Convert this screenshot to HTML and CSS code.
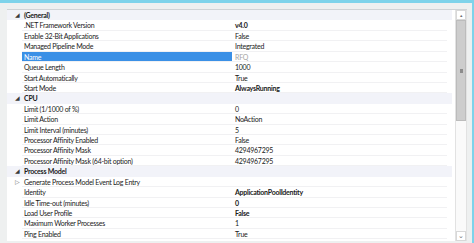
FILE: index.html
```html
<!DOCTYPE html>
<html lang="en">
<head>
    <meta charset="UTF-8">
    <title>Advanced Settings</title>
    <link rel="stylesheet" href="styles.css">
</head>
<body>
    <div class="window">
        <div class="grid-panel">
            <div class="prop-list" id="propList"></div>
            <div class="scrollbar">
                <div class="scroll-btn">&#9650;</div>
                <div class="scroll-thumb"><span class="grip"></span></div>
                <div class="scroll-track"></div>
                <div class="scroll-btn down">&#8964;</div>
            </div>
        </div>
    </div>

    <script>
        // cat = category header, sub = collapsed child, b = bold value, sel = selected
        const props = [
            { cat: "(General)" },
            { name: ".NET Framework Version", value: "v4.0", b: true },
            { name: "Enable 32-Bit Applications", value: "False" },
            { name: "Managed Pipeline Mode", value: "Integrated" },
            { name: "Name", value: "RFQ", sel: true },
            { name: "Queue Length", value: "1000" },
            { name: "Start Automatically", value: "True" },
            { name: "Start Mode", value: "AlwaysRunning", b: true },
            { cat: "CPU" },
            { name: "Limit (1/1000 of %)", value: "0" },
            { name: "Limit Action", value: "NoAction" },
            { name: "Limit Interval (minutes)", value: "5" },
            { name: "Processor Affinity Enabled", value: "False" },
            { name: "Processor Affinity Mask", value: "4294967295" },
            { name: "Processor Affinity Mask (64-bit option)", value: "4294967295" },
            { cat: "Process Model" },
            { name: "Generate Process Model Event Log Entry", value: "", sub: true },
            { name: "Identity", value: "ApplicationPoolIdentity", b: true },
            { name: "Idle Time-out (minutes)", value: "0", b: true },
            { name: "Load User Profile", value: "False", b: true },
            { name: "Maximum Worker Processes", value: "1" },
            { name: "Ping Enabled", value: "True" }
        ];

        const list = document.getElementById('propList');

        props.forEach(p => {
            const row = document.createElement('div');
            row.className = 'prop-row';

            const arrow = document.createElement('span');
            arrow.className = 'arrow';

            if (p.cat) {
                row.classList.add('category');
                arrow.textContent = '\u25E2';
                const label = document.createElement('span');
                label.className = 'cat-name';
                label.textContent = p.cat;
                row.appendChild(arrow);
                row.appendChild(label);
            } else {
                if (p.sub) {
                    arrow.textContent = '\u25B7';
                    arrow.classList.add('open');
                }
                const name = document.createElement('span');
                name.className = 'name';
                name.textContent = p.name;
                const value = document.createElement('span');
                value.className = 'value';
                value.textContent = p.value;
                if (p.b) value.classList.add('bold');
                if (p.sel) row.classList.add('selected');
                row.appendChild(arrow);
                row.appendChild(name);
                row.appendChild(value);
            }
            list.appendChild(row);
        });
    </script>
</body>
</html>
```

FILE: styles.css
```css
body {
    margin: 0;
    background-color: #eef0f0;
    font-family: Lato, "Noto Sans", sans-serif;
    font-size: 7px;
    letter-spacing: -0.25px;
    color: #1a1a1a;
}

.window {
    height: 243px;
    box-sizing: border-box;
    border-top: 3px solid #7ed3ea;
    border-right: 2px solid #7ed3ea;
    padding: 6px 5px 3px 7px;
    background-color: #eef0f0;
}

.grid-panel {
    display: flex;
    height: 100%;
    background-color: #fff;
    border-top: 1px solid #cfd3d6;
}

.prop-list {
    flex: 1;
    padding-right: 8px;
}

.prop-row {
    display: grid;
    grid-template-columns: 15px 210px 1fr;
    height: 10.43px;
    line-height: 9.43px;
    box-sizing: border-box;
    white-space: nowrap;
}

.prop-row > span {
    padding-top: 1px;
}

.prop-row .name,
.prop-row .value {
    border-bottom: 1px solid #f1f1f3;
    padding-left: 2px;
    overflow: hidden;
}

.prop-row .value {
    padding-left: 3px;
}

.value.bold {
    font-weight: bold;
}

.arrow {
    font-size: 5.5px;
    text-align: center;
    color: #3a3a3a;
    padding-left: 6px;
}

.arrow.open {
    color: #6a6a6a;
}

.category {
    background-color: #f2f3f9;
    margin-right: -5px;
}

.cat-name {
    grid-column: 2 / 4;
    font-weight: bold;
    padding-left: 2px;
}

.selected .name {
    background-color: #3b90e6;
    color: #fff;
}

.selected .value {
    color: #a4a4a4;
}

.scrollbar {
    width: 10px;
    display: flex;
    flex-direction: column;
    background-color: #f4f4f4;
    border-left: 1px solid #e2e2e2;
    border-right: 1px solid #e2e2e2;
}

.scroll-btn {
    height: 10px;
    font-size: 4px;
    line-height: 10px;
    text-align: center;
    color: #707070;
    background-color: #fff;
    border: 1px solid #d8d8d8;
    box-sizing: border-box;
}

.scroll-btn.down {
    font-size: 7px;
    line-height: 6px;
}

.scroll-thumb {
    height: 101px;
    background-color: #cdcdcd;
    border: 1px solid #bcbcbc;
    box-sizing: border-box;
    display: flex;
    align-items: center;
    justify-content: center;
}

.grip {
    width: 3px;
    height: 4px;
    background-color: #8c8c8c;
}

.scroll-track {
    flex: 1;
    background-color: #fafafa;
}
```
